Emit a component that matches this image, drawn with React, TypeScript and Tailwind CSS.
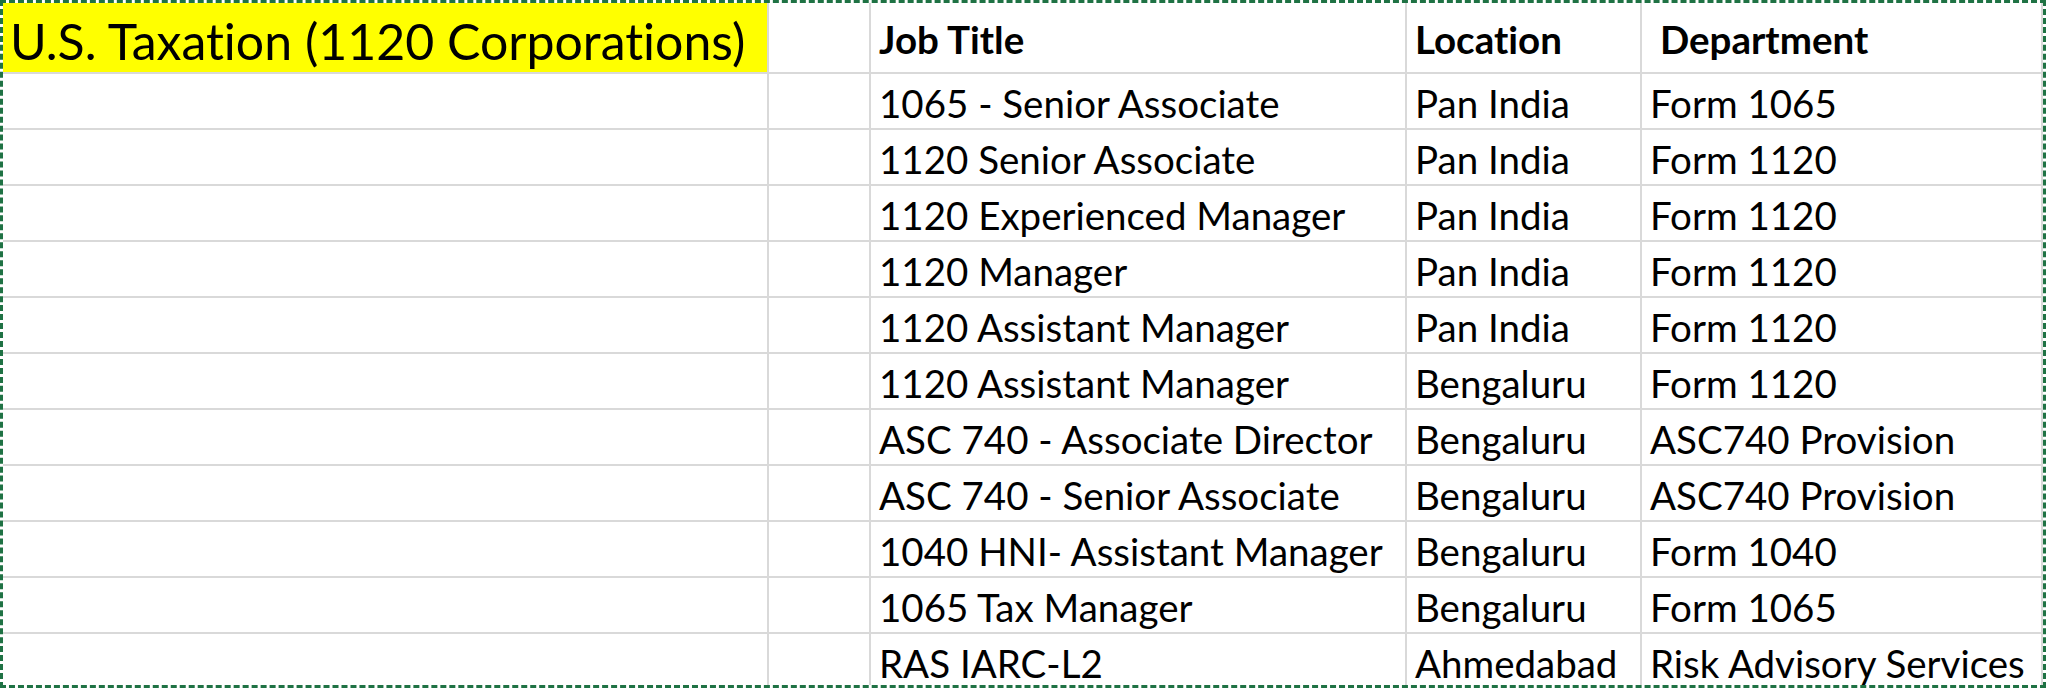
const rows: [string, string, string][] = [
  ["1065 - Senior Associate", "Pan India", "Form 1065"],
  ["1120 Senior Associate", "Pan India", "Form 1120"],
  ["1120 Experienced Manager", "Pan India", "Form 1120"],
  ["1120 Manager", "Pan India", "Form 1120"],
  ["1120 Assistant Manager", "Pan India", "Form 1120"],
  ["1120 Assistant Manager", "Bengaluru", "Form 1120"],
  ["ASC 740 - Associate Director", "Bengaluru", "ASC740 Provision"],
  ["ASC 740 - Senior Associate", "Bengaluru", "ASC740 Provision"],
  ["1040 HNI- Assistant Manager", "Bengaluru", "Form 1040"],
  ["1065 Tax Manager", "Bengaluru", "Form 1065"],
  ["RAS IARC-L2", "Ahmedabad", "Risk Advisory Services"],
]

const cell = "flex items-center border-b-2 border-r-2 border-[#d9d9d9] px-[8px] whitespace-nowrap"

export default function App() {
  return (
    <div className="h-[688px] w-[2048px] overflow-hidden bg-white font-['Lato',sans-serif] text-black [font-variant-ligatures:none]">
      <div className="h-full w-[2046px] overflow-hidden border-[3px] border-dashed border-[#1f7244]">
        <div className="grid grid-cols-[766px_102px_536px_235px_1fr] grid-rows-[71px_repeat(11,56px)] text-[38.5px] leading-none">
          <div className={`${cell} bg-[#ffff00] pl-[7px] pt-[6px] text-[50px]`}>U.S. Taxation (1120 Corporations)</div>
          <div className={cell}></div>
          <div className={`${cell} pt-[4px] font-bold`}>Job Title</div>
          <div className={`${cell} pt-[4px] font-bold`}>Location</div>
          <div className={`${cell} pt-[4px] pl-[18px] font-bold`}>Department</div>
          {rows.map(([title, loc, dept], i) => (
            <div key={i} className="contents">
              <div className={cell}></div>
              <div className={cell}></div>
              <div className={`${cell} pt-[4px]`}>{title}</div>
              <div className={`${cell} pt-[4px]`}>{loc}</div>
              <div className={`${cell} pt-[4px]`}>{dept}</div>
            </div>
          ))}
        </div>
      </div>
    </div>
  )
}
